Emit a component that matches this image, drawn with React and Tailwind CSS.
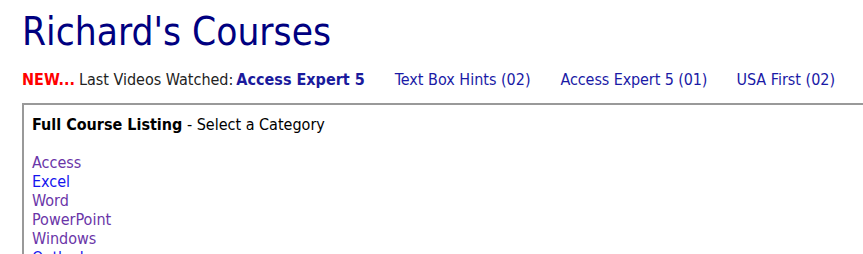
export default function App() {
  const courses = [
    { name: "Access", visited: true },
    { name: "Excel", visited: false },
    { name: "Word", visited: true },
    { name: "PowerPoint", visited: true },
    { name: "Windows", visited: true },
    { name: "Outlook", visited: false },
  ];

  return (
    <div className="h-screen bg-white overflow-hidden pl-[22px] pt-[10px] font-['DejaVu_Sans_Condensed','DejaVu_Sans',sans-serif]">

      <h1 className="text-[38.5px] leading-[44px] text-[#000080]">
        Richard's Courses
      </h1>

      <div className="flex items-baseline mt-[16px] text-[16px] leading-[20px] whitespace-nowrap">
        <span className="font-bold text-[#ff0000]">NEW...</span>
        <span className="ml-[4px] text-[#222]">Last Videos Watched:</span>
        <span className="ml-[3px] font-bold text-[#1a1a9c]">Access Expert 5</span>
        <span className="ml-[30px] text-[#1a1aa6]">Text Box Hints (02)</span>
        <span className="ml-[30px] text-[#1a1aa6] tracking-[-0.1px]">Access Expert 5 (01)</span>
        <span className="ml-[29px] text-[#1a1aa6]">USA First (02)</span>
      </div>

      <div className="mt-[13px] w-[900px] border-2 border-[#999] px-[8px] pt-[10px]">

        <p className="text-[16px] leading-[20px] text-black">
          <span className="font-bold">Full Course Listing</span> - Select a Category
        </p>

        <div className="mt-[18px] flex flex-col text-[16px] leading-[19px]">
          {courses.map((c) => (
            <a
              key={c.name}
              href="#"
              className={c.visited ? "text-[#6a35a8]" : "text-[#1414ee]"}
            >
              {c.name}
            </a>
          ))}
        </div>

      </div>

    </div>
  );
}
